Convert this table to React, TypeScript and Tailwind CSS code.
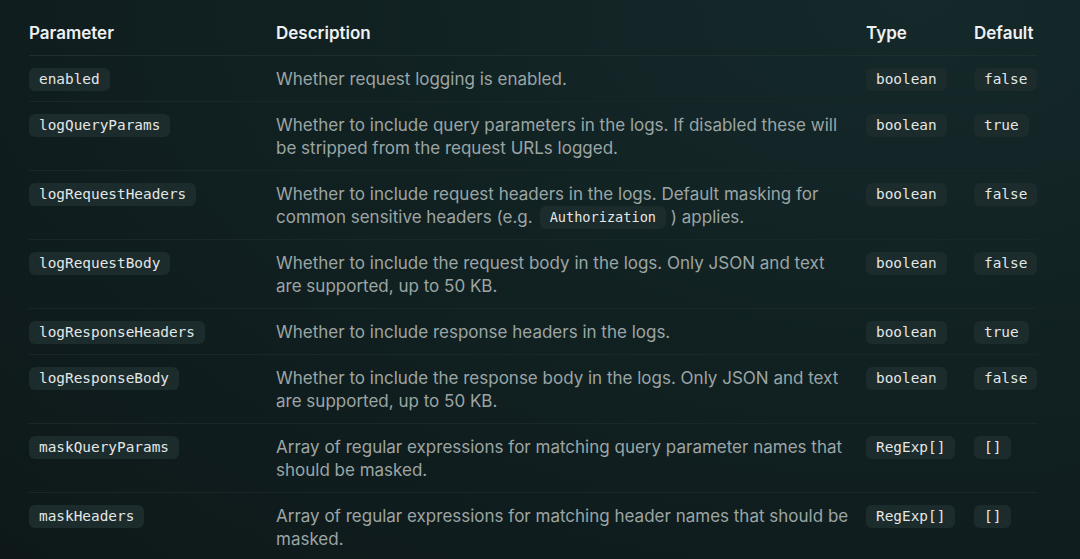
import React from "react";

type Row = {
  name: string;
  description: React.ReactNode;
  type: string;
  def: string;
};

const chip =
  "inline-block align-top rounded-[6px] bg-[#1c2b2b] px-[10px] py-[3px] font-['DejaVu_Sans_Mono',monospace] leading-[17px] text-[#e3e7e7]";

function Code({ children }: { children: React.ReactNode }) {
  return <code className={`${chip} text-[14.4px]`}>{children}</code>;
}

const rows: Row[] = [
  { name: "enabled", description: "Whether request logging is enabled.", type: "boolean", def: "false" },
  {
    name: "logQueryParams",
    description: "Whether to include query parameters in the logs. If disabled these will be stripped from the request URLs logged.",
    type: "boolean",
    def: "true",
  },
  {
    name: "logRequestHeaders",
    description: (
      <>
        Whether to include request headers in the logs. Default masking for common sensitive headers (e.g.
        <code className={`${chip} ml-[7px] text-[13.6px]`}>Authorization</code> ) applies.
      </>
    ),
    type: "boolean",
    def: "false",
  },
  {
    name: "logRequestBody",
    description: "Whether to include the request body in the logs. Only JSON and text are supported, up to 50 KB.",
    type: "boolean",
    def: "false",
  },
  { name: "logResponseHeaders", description: "Whether to include response headers in the logs.", type: "boolean", def: "true" },
  {
    name: "logResponseBody",
    description: "Whether to include the response body in the logs. Only JSON and text are supported, up to 50 KB.",
    type: "boolean",
    def: "false",
  },
  {
    name: "maskQueryParams",
    description: "Array of regular expressions for matching query parameter names that should be masked.",
    type: "RegExp[]",
    def: "[]",
  },
  {
    name: "maskHeaders",
    description: "Array of regular expressions for matching header names that should be masked.",
    type: "RegExp[]",
    def: "[]",
  },
];

const grid = "grid grid-cols-[247px_590px_108px_63px]";

export default function App() {
  return (
    <div className="h-[559px] w-[1080px] overflow-hidden bg-[radial-gradient(ellipse_at_85%_0%,#15292a_0%,#112122_45%,#0e1819_100%)] pl-[29px] pt-[10px] font-['Inter',sans-serif]">
      <div className="w-[1008px]">
        <div className={`${grid} border-b border-[#1e2d2d] pb-[10px] pt-[12px] text-[17px] font-semibold leading-[23px] text-[#eef1f1]`}>
          <div>Parameter</div>
          <div>Description</div>
          <div>Type</div>
          <div>Default</div>
        </div>
        {rows.map((row) => (
          <div key={row.name} className={`${grid} border-b border-[#1a2727] pb-[10px] pt-[12px] text-[17px] leading-[23px]`}>
            <div>
              <Code>{row.name}</Code>
            </div>
            <div className="pr-[13px] text-[#9ca5a5]">{row.description}</div>
            <div>
              <Code>{row.type}</Code>
            </div>
            <div>
              <Code>{row.def}</Code>
            </div>
          </div>
        ))}
      </div>
    </div>
  );
}
